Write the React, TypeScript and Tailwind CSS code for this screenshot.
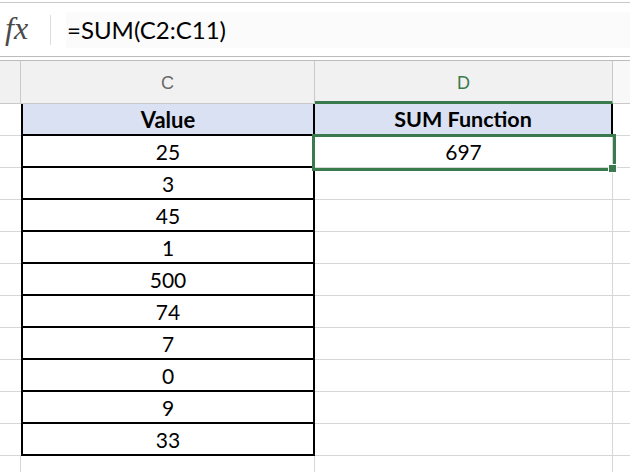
import React from "react"

const values = ["25", "3", "45", "1", "500", "74", "7", "0", "9", "33"]

const cellFont = { fontFamily: "Lato, 'Open Sans', sans-serif" }

export default function App() {
  return (
    <div className="relative w-[630px] h-[472px] overflow-hidden bg-white" style={cellFont}>
      {/* top edge */}
      <div className="h-[2px] bg-white" />
      <div className="h-px bg-[#c8c8c8]" />

      {/* formula bar */}
      <div className="flex h-[53px] items-center bg-white">
        <div className="flex w-[50px] items-center pl-[5px] pb-[3px]">
          <span className="text-[32px] leading-none italic text-[#4a4a4a]" style={{ fontFamily: "'Liberation Serif', serif" }}>
            fx
          </span>
        </div>
        <div className="h-[30px] w-px bg-[#dcdcdc]" />
        <div className="ml-[15px] flex h-[36px] flex-1 items-center bg-[#fbfbfb] pl-[1px]">
          <span className="text-[24px] text-black">=SUM(C2:C11)</span>
        </div>
      </div>

      {/* double separator */}
      <div className="h-[5px] border-y border-y-[#bcbcbc] bg-white" />

      {/* sheet */}
      <div className="grid grid-cols-[21px_294px_298px_1fr]">
        {/* column headers */}
        <div className="h-[43px] border-r border-b border-[#c9c9c9] bg-[#f1f1f1]" />
        <div className="flex h-[43px] items-center justify-center border-r border-b border-[#c9c9c9] bg-[#f1f1f1] pt-[2px]">
          <span className="text-[18px] text-[#6a6a6a]" style={{ fontFamily: "'Liberation Sans', sans-serif" }}>C</span>
        </div>
        <div className="flex h-[43px] items-center justify-center border-r border-r-[#c9c9c9] border-b-[3px] border-b-[#3b7a4c] bg-[#f1f1f1] pt-[4px]">
          <span className="text-[18px] text-[#3b7a4c]" style={{ fontFamily: "'Liberation Sans', sans-serif" }}>D</span>
        </div>
        <div className="h-[43px] border-b border-[#c9c9c9] bg-[#f8f8f8]" />

        {/* row 1: titles */}
        <div className="h-[32px] border-b border-[#d6d6d6]" />
        <div className="flex h-[32px] items-center justify-center border-x-2 border-b-2 border-black bg-[#d9e1f2]">
          <span className="text-[22px] font-bold text-black">Value</span>
        </div>
        <div className="flex h-[32px] items-center justify-center border-r-2 border-b border-r-black border-b-[#d6d6d6] bg-[#d9e1f2]">
          <span className="text-[21.5px] font-bold text-black">SUM Function</span>
        </div>
        <div className="h-[32px] border-b border-[#d6d6d6]" />

        {values.map((v, i) => (
          <React.Fragment key={i}>
            <div className="h-[32px] border-b border-[#d6d6d6]" />
            <div className="flex h-[32px] items-center justify-center border-x-2 border-b-2 border-black pt-px">
              <span className="text-[21px] text-black">{v}</span>
            </div>
            <div className="flex h-[32px] items-center justify-center border-r border-b border-[#d6d6d6] pt-px">
              {i === 0 && <span className="text-[21px] text-black">697</span>}
            </div>
            <div className="h-[32px] border-b border-[#d6d6d6]" />
          </React.Fragment>
        ))}

        {/* partial bottom row */}
        <div className="h-[32px] border-r border-[#d6d6d6]" />
        <div className="h-[32px] border-r border-[#d6d6d6]" />
        <div className="h-[32px] border-r border-[#d6d6d6]" />
        <div className="h-[32px]" />
      </div>

      {/* selection around D2 */}
      <div className="absolute left-[312px] top-[134px] h-[37px] w-[304px] border-[3px] border-[#3b7a4c]" />
      <div className="absolute left-[608px] top-[164px] h-[9px] w-[9px] border border-white bg-[#3b7a4c]" />
    </div>
  )
}
